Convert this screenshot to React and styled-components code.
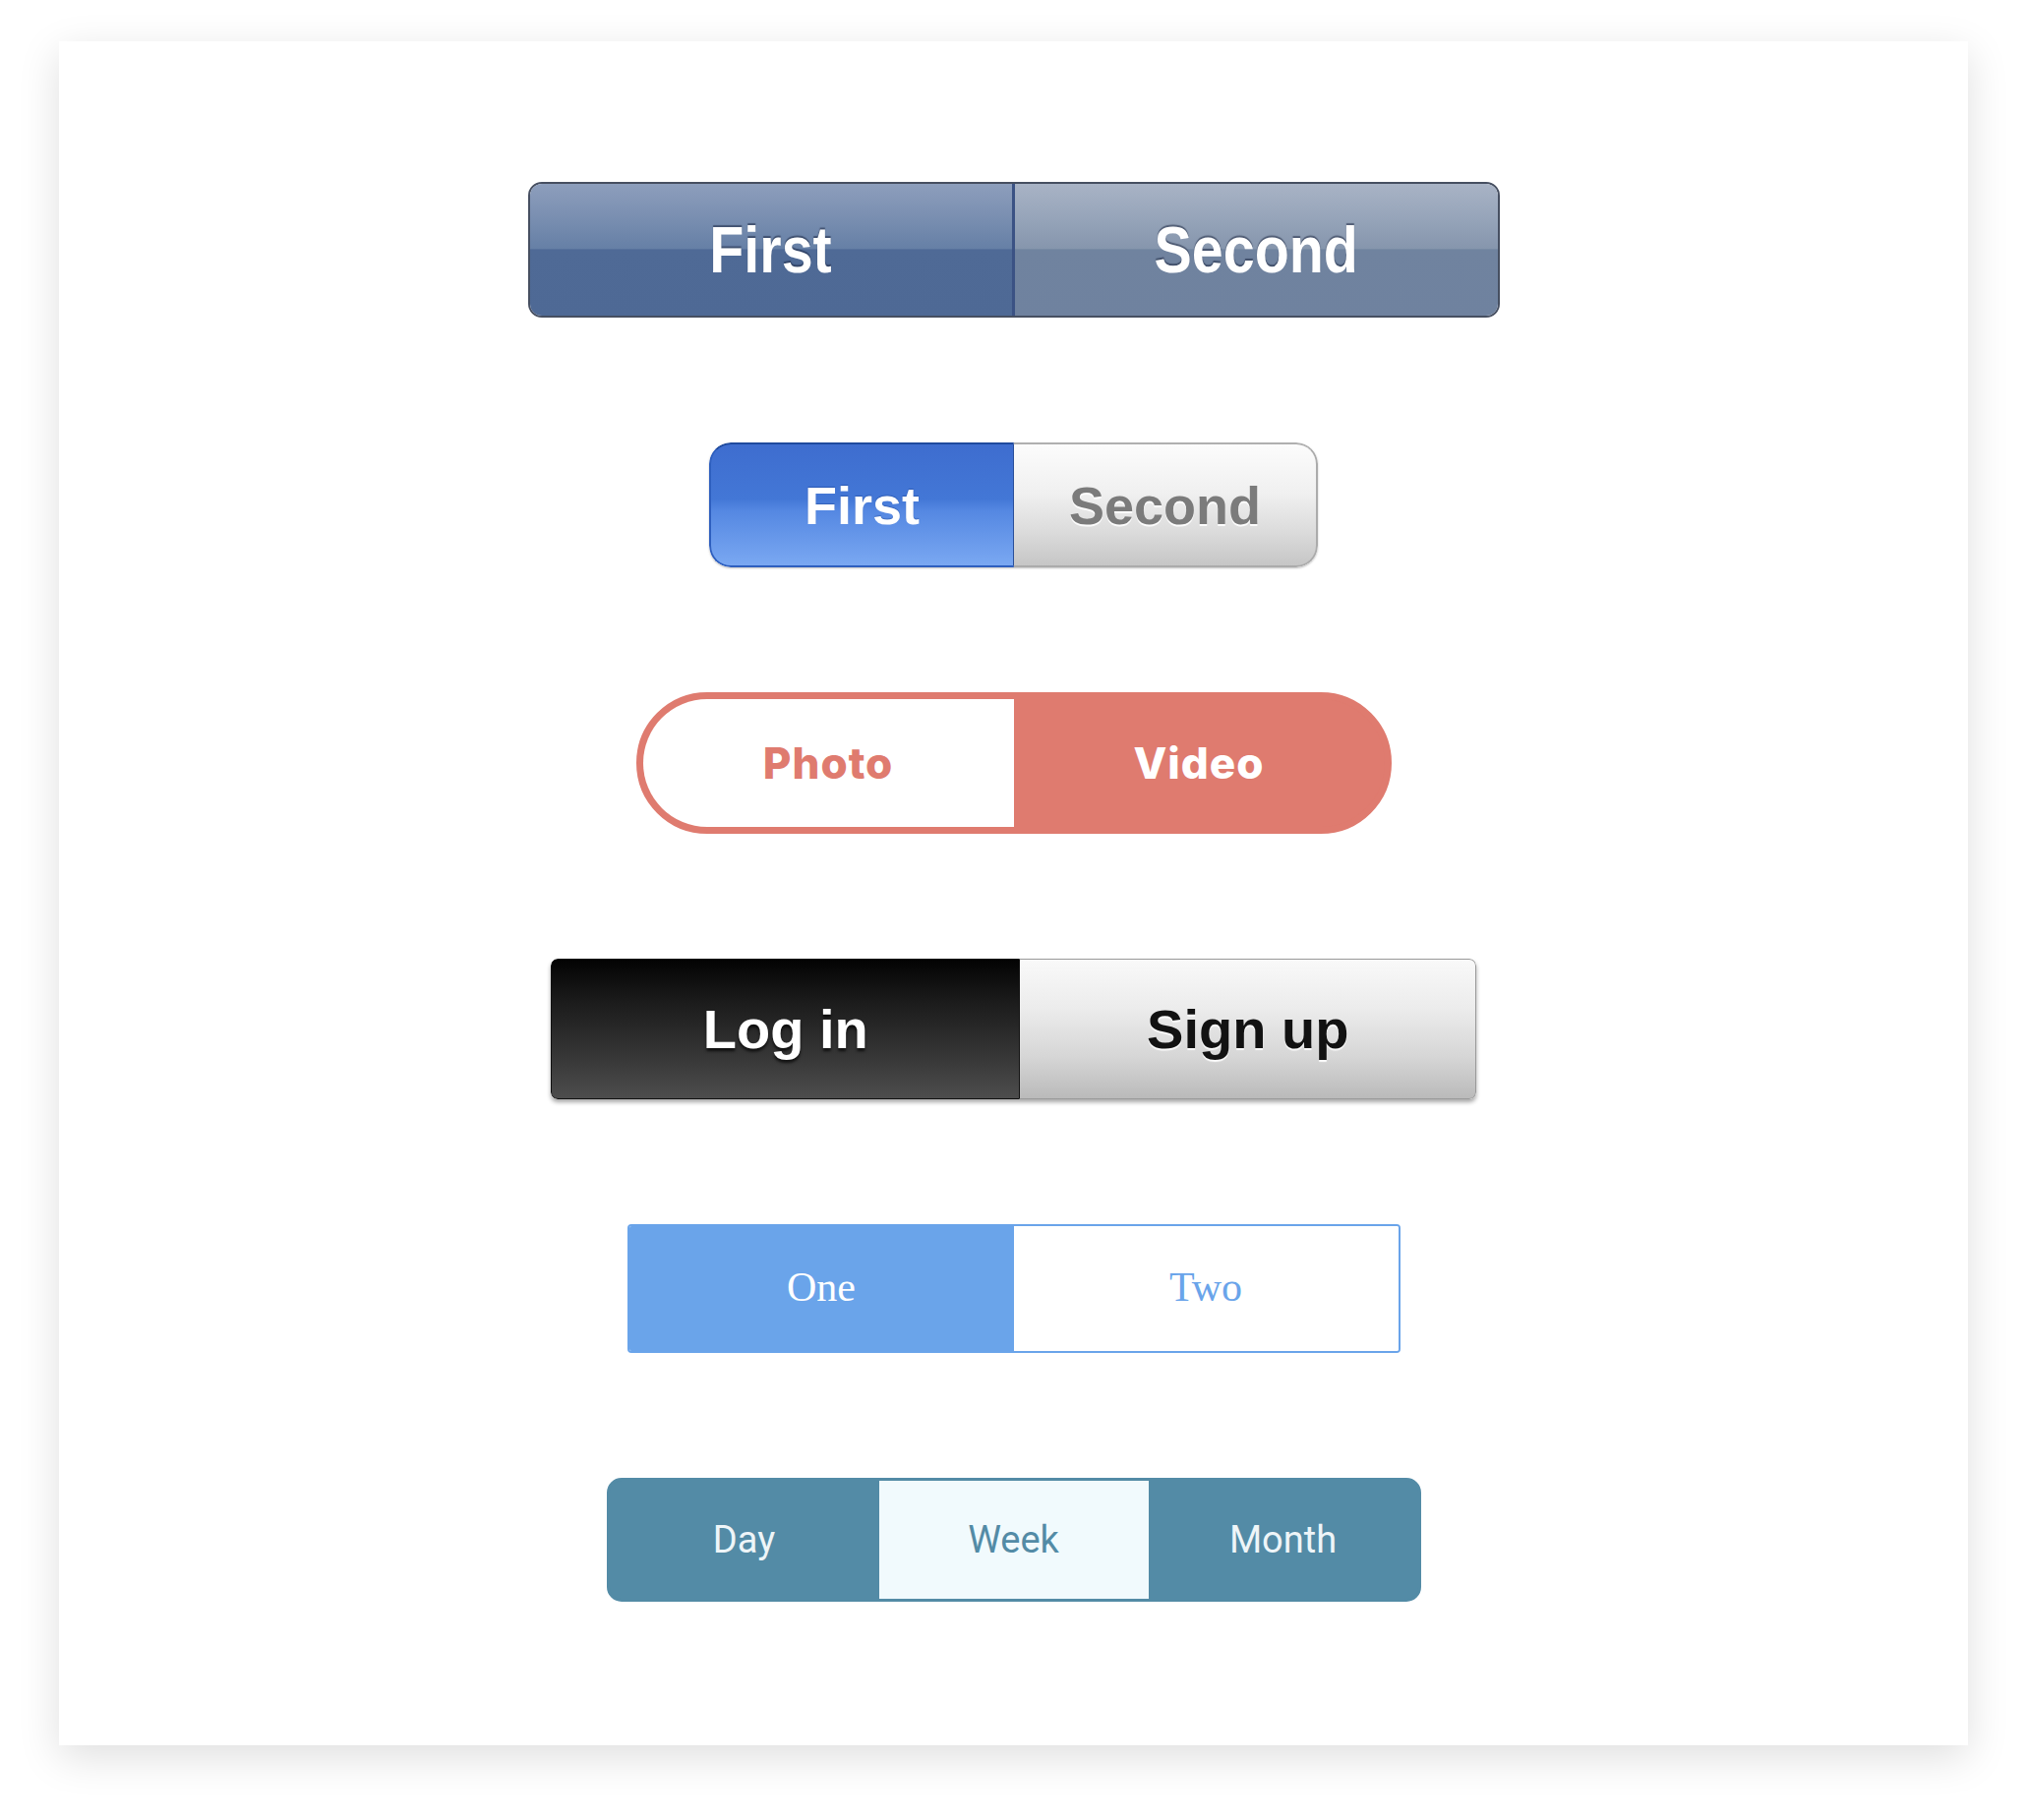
import React from 'react';
import styled, { createGlobalStyle } from 'styled-components';

const GlobalStyle = createGlobalStyle`
  html, body {
    margin: 0;
    background: #ffffff;
  }
  body {
    font-family: "Liberation Sans", Arial, sans-serif;
  }
`;

const Page = styled.div`
  padding: 42px 60px 78px;
`;

const Card = styled.div`
  background: #fff;
  box-shadow: 0 12px 40px rgba(0, 0, 0, 0.13);
  display: flex;
  flex-direction: column;
  align-items: center;
  gap: 127px;
  padding: 143px 0 146px;
`;

/* 1 - old navy glossy control */
const NavyBar = styled.div`
  display: flex;
  width: 988px;
  height: 138px;
  box-sizing: border-box;
  border: 2px solid #464f61;
  border-radius: 14px;
  overflow: hidden;
`;

const NavySeg = styled.div`
  flex: 1;
  display: flex;
  align-items: center;
  justify-content: center;
  font: bold 66px "Liberation Sans", Arial, sans-serif;
  color: #fff;
  text-shadow: 0 -2px 1px rgba(20, 30, 55, 0.5);
  background: ${p =>
    p.$active
      ? 'linear-gradient(#8d9ebc 0%, #7a8fb1 25%, #6680a6 49%, #4f6a96 50%, #4e6995 100%)'
      : 'linear-gradient(#a8b3c5 0%, #97a5ba 25%, #8696ad 49%, #70839f 50%, #6f829f 100%)'};
  & + & {
    border-left: 3px solid #3b5284;
  }
`;

const Squeeze = styled.span`
  display: inline-block;
  transform: scaleX(0.87);
`;

/* 2 - bright blue glossy control */
const BlueBar = styled.div`
  display: flex;
  width: 619px;
  height: 127px;
  box-sizing: border-box;
  border-radius: 22px;
  overflow: hidden;
  box-shadow: 0 1px 2px rgba(0, 0, 0, 0.25);
`;

const BlueSeg = styled.div`
  flex: 1;
  display: flex;
  align-items: center;
  justify-content: center;
  font: bold 54px "Liberation Sans", Arial, sans-serif;
  color: ${p => (p.$active ? '#ffffff' : '#7b7b7b')};
  text-shadow: ${p => (p.$active ? '0 -1px 1px rgba(0, 40, 120, 0.35)' : '0 2px 0 rgba(255, 255, 255, 0.9)')};
  border: 2px solid ${p => (p.$active ? '#2e5fbf' : '#ababab')};
  border-top-color: ${p => (p.$active ? '#1f4a9e' : '#b0b0b0')};
  background: ${p =>
    p.$active
      ? 'linear-gradient(#3e6dcf 0%, #4377d6 45%, #5588e2 55%, #7aa8f2 100%)'
      : 'linear-gradient(#fcfcfc 0%, #f0f0f0 40%, #dddddd 70%, #c6c6c6 100%)'};
  border-radius: ${p => (p.$active ? '22px 0 0 22px' : '0 22px 22px 0')};
  border-left-width: ${p => (p.$active ? '2px' : '0')};
  border-right-width: ${p => (p.$active ? '1px' : '2px')};
  border-right-color: ${p => (p.$active ? '#2a4f9a' : '#ababab')};
`;

/* 3 - coral pill */
const PillBar = styled.div`
  display: flex;
  width: 768px;
  height: 144px;
  box-sizing: border-box;
  border: 7px solid #df7b6f;
  border-radius: 72px;
  overflow: hidden;
  background: #df7b6f;
`;

const PillSeg = styled.div`
  flex: 1;
  display: flex;
  align-items: center;
  justify-content: center;
  font: 800 44px Inter, "Noto Sans", sans-serif;
  letter-spacing: 1px;
  color: ${p => (p.$active ? '#ffffff' : '#df7b6f')};
  background: ${p => (p.$active ? '#df7b6f' : '#ffffff')};
`;

/* 4 - black / silver control */
const DarkBar = styled.div`
  display: flex;
  width: 941px;
  height: 143px;
  box-sizing: border-box;
  border-radius: 7px;
  overflow: hidden;
  box-shadow: 0 3px 4px rgba(0, 0, 0, 0.35);
`;

const DarkSeg = styled.div`
  flex: ${p => (p.$active ? '477' : '464')};
  display: flex;
  align-items: center;
  justify-content: center;
  font: bold 56px "Liberation Sans", Arial, sans-serif;
  color: ${p => (p.$active ? '#ffffff' : '#121212')};
  text-shadow: ${p => (p.$active ? '0 3px 3px rgba(0, 0, 0, 0.7)' : '0 2px 1px rgba(255, 255, 255, 0.9)')};
  background: ${p =>
    p.$active
      ? 'linear-gradient(#030303 0%, #1b1b1b 30%, #333333 65%, #4d4d4d 100%)'
      : 'linear-gradient(#f9f9f9 0%, #ececec 35%, #d6d6d6 70%, #bababa 100%)'};
  border: ${p => (p.$active ? '1px solid #111' : '1px solid #9a9a9a')};
  border-left-width: ${p => (p.$active ? '1px' : '0')};
  border-radius: ${p => (p.$active ? '7px 0 0 7px' : '0 7px 7px 0')};
`;

/* 5 - flat blue control */
const FlatBar = styled.div`
  display: flex;
  width: 786px;
  height: 131px;
  box-sizing: border-box;
  border: 2px solid #6aa4ea;
  border-radius: 4px;
  overflow: hidden;
`;

const FlatSeg = styled.div`
  flex: 1;
  display: flex;
  align-items: center;
  justify-content: center;
  padding-bottom: 3px;
  font: 42px "Liberation Serif", "Times New Roman", serif;
  color: ${p => (p.$active ? '#ffffff' : '#6aa4ea')};
  background: ${p => (p.$active ? '#6aa4ea' : '#ffffff')};
`;

/* 6 - teal three-way control */
const TealBar = styled.div`
  display: flex;
  width: 828px;
  height: 126px;
  box-sizing: border-box;
  border: 3px solid #538ba6;
  border-radius: 15px;
  overflow: hidden;
  background: #538ba6;
`;

const TealSeg = styled.div`
  flex: 1;
  display: flex;
  align-items: center;
  justify-content: center;
  font: 38px Roboto, "Noto Sans", sans-serif;
  color: ${p => (p.$active ? '#538ba6' : '#eef5f8')};
  background: ${p => (p.$active ? '#f1fafd' : '#538ba6')};
`;

export default function App() {
  return (
    <>
      <GlobalStyle />
      <Page>
        <Card>
          <NavyBar>
            <NavySeg $active><Squeeze>First</Squeeze></NavySeg>
            <NavySeg><Squeeze>Second</Squeeze></NavySeg>
          </NavyBar>

          <BlueBar>
            <BlueSeg $active>First</BlueSeg>
            <BlueSeg>Second</BlueSeg>
          </BlueBar>

          <PillBar>
            <PillSeg>Photo</PillSeg>
            <PillSeg $active>Video</PillSeg>
          </PillBar>

          <DarkBar>
            <DarkSeg $active>Log in</DarkSeg>
            <DarkSeg>Sign up</DarkSeg>
          </DarkBar>

          <FlatBar>
            <FlatSeg $active>One</FlatSeg>
            <FlatSeg>Two</FlatSeg>
          </FlatBar>

          <TealBar>
            <TealSeg>Day</TealSeg>
            <TealSeg $active>Week</TealSeg>
            <TealSeg>Month</TealSeg>
          </TealBar>
        </Card>
      </Page>
    </>
  );
}
